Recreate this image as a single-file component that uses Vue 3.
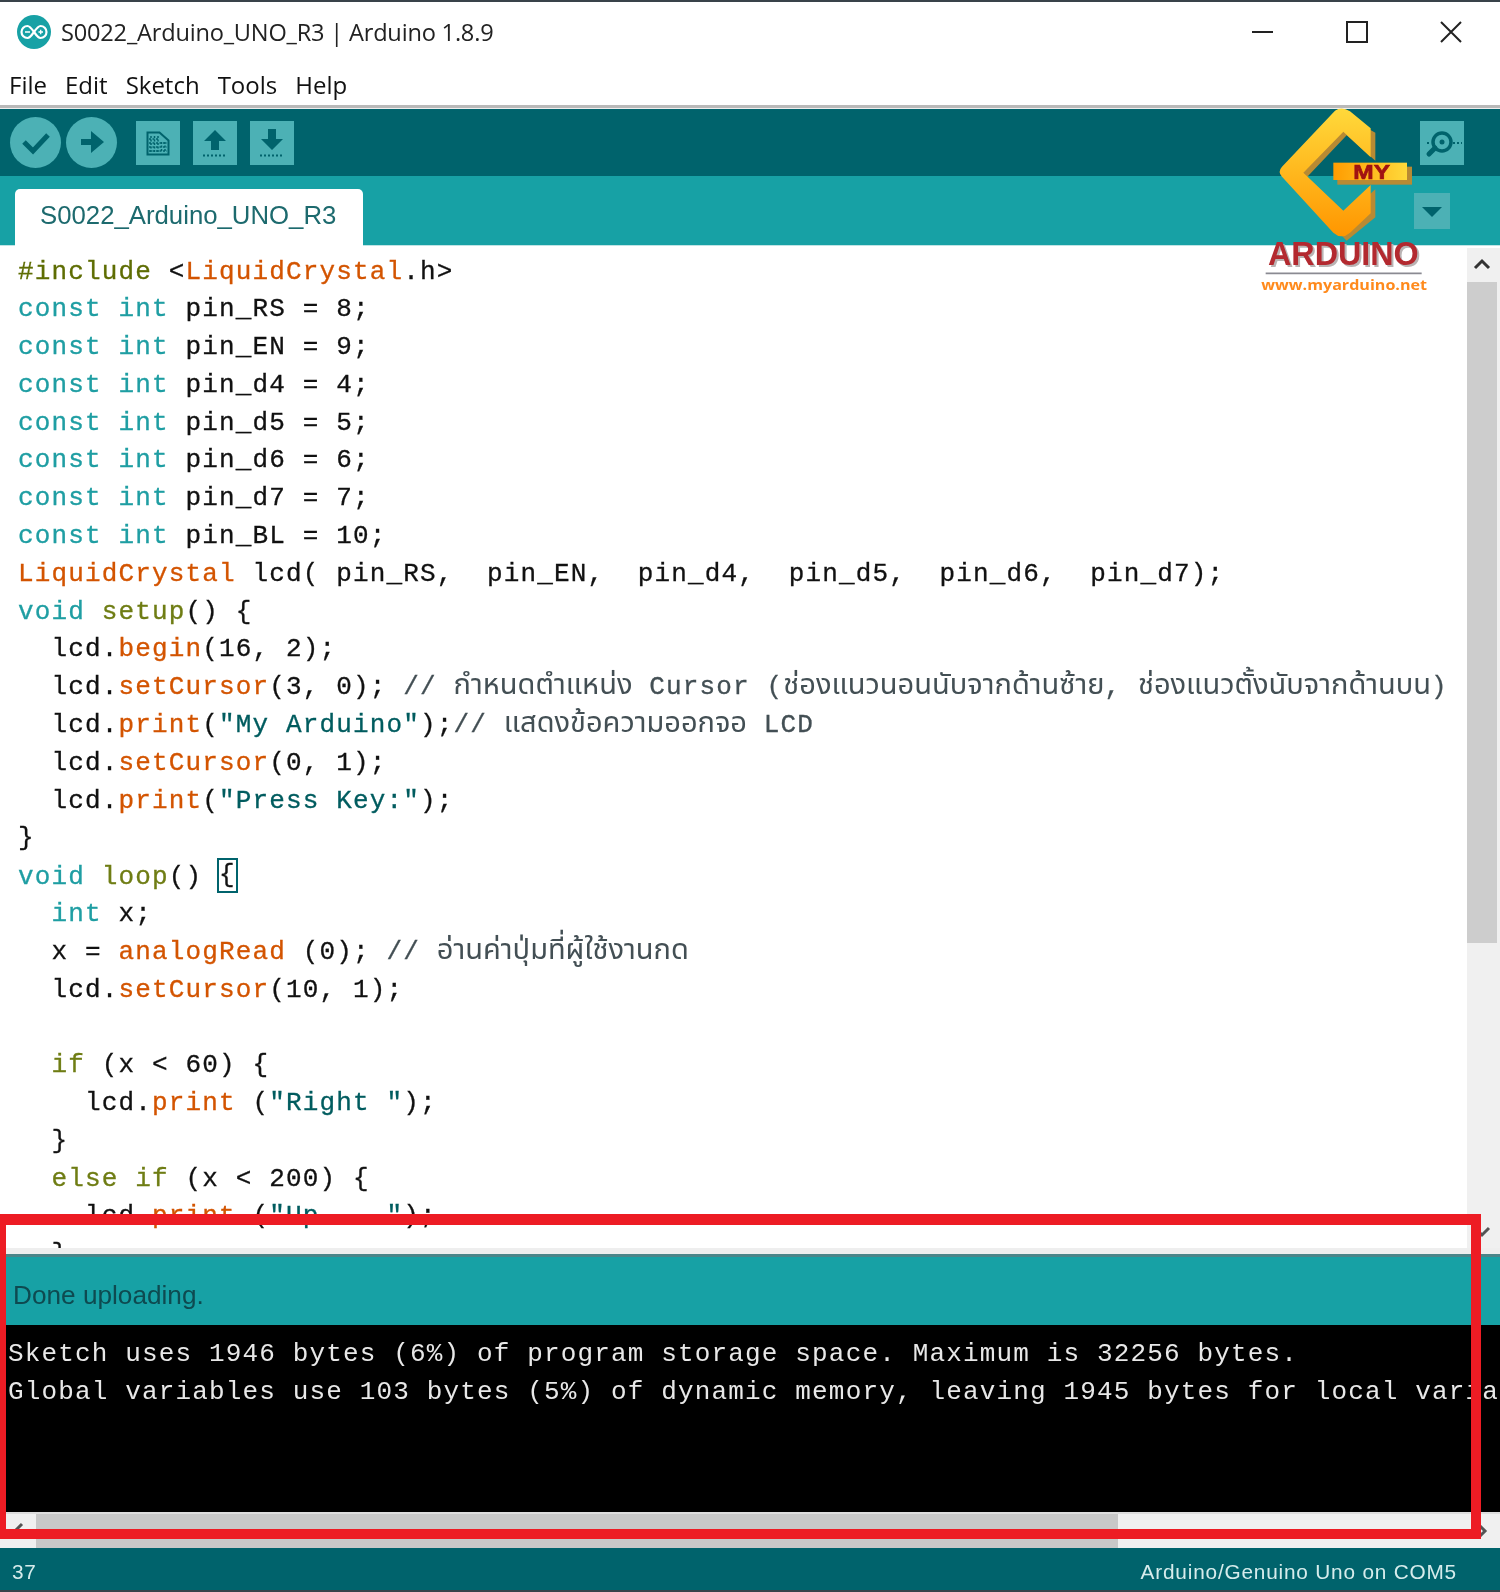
<script setup>
const code = [
  [['pp', '#include'], ['n', ' <'], ['f', 'LiquidCrystal'], ['n', '.h>']],
  ...[['pin_RS', '8'], ['pin_EN', '9'], ['pin_d4', '4'], ['pin_d5', '5'], ['pin_d6', '6'], ['pin_d7', '7'], ['pin_BL', '10']].map(
    ([name, value]) => [['k', 'const'], ['n', ' '], ['k', 'int'], ['n', ` ${name} = ${value};`]]
  ),
  [['f', 'LiquidCrystal'], ['n', ' lcd( pin_RS,  pin_EN,  pin_d4,  pin_d5,  pin_d6,  pin_d7);']],
  [['k', 'void'], ['n', ' '], ['o', 'setup'], ['n', '() {']],
  [['n', '  lcd.'], ['f', 'begin'], ['n', '(16, 2);']],
  [['n', '  lcd.'], ['f', 'setCursor'], ['n', '(3, 0); '], ['c', '// '], ['t', 'กำหนดตำแหน่ง'], ['c', ' Cursor ('], ['t', 'ช่องแนวนอนนับจากด้านซ้าย'], ['c', ', '], ['t', 'ช่องแนวตั้งนับจากด้านบน'], ['c', ')']],
  [['n', '  lcd.'], ['f', 'print'], ['n', '('], ['s', '"My Arduino"'], ['n', ');'], ['c', '// '], ['t', 'แสดงข้อความออกจอ'], ['c', ' LCD']],
  [['n', '  lcd.'], ['f', 'setCursor'], ['n', '(0, 1);']],
  [['n', '  lcd.'], ['f', 'print'], ['n', '('], ['s', '"Press Key:"'], ['n', ');']],
  [['n', '}']],
  [['k', 'void'], ['n', ' '], ['o', 'loop'], ['n', '() '], ['b', '{']],
  [['n', '  '], ['k', 'int'], ['n', ' x;']],
  [['n', '  x = '], ['f', 'analogRead'], ['n', ' (0); '], ['c', '// '], ['t', 'อ่านค่าปุ่มที่ผู้ใช้งานกด']],
  [['n', '  lcd.'], ['f', 'setCursor'], ['n', '(10, 1);']],
  [['n', ' ']],
  [['n', '  '], ['o', 'if'], ['n', ' (x < 60) {']],
  [['n', '    lcd.'], ['f', 'print'], ['n', ' ('], ['s', '"Right "'], ['n', ');']],
  [['n', '  }']],
  [['n', '  '], ['o', 'else'], ['n', ' '], ['o', 'if'], ['n', ' (x < 200) {']],
  [['n', '    lcd.'], ['f', 'print'], ['n', ' ('], ['s', '"Up    "'], ['n', ');']],
  [['n', '  }']]
]
const consoleLines = [
  'Sketch uses 1946 bytes (6%) of program storage space. Maximum is 32256 bytes.',
  'Global variables use 103 bytes (5%) of dynamic memory, leaving 1945 bytes for local variables.'
]
const menus = ['File', 'Edit', 'Sketch', 'Tools', 'Help']
</script>

<template>
  <div class="app">
    <header class="title">
      <svg class="logo" viewBox="0 0 34 34" width="34" height="34">
        <circle cx="17" cy="17" r="17" fill="#17a1a5" />
        <path d="M10.500 11a6 6 0 1 0 0 12c4.500 0 8.500-12 13-12a6 6 0 1 1 0 12c-4.500 0-8.500-12-13-12z" fill="none" stroke="#fff" stroke-width="2.200" />
        <path d="M8 17h5M21.500 17h4.500M23.700 14.800v4.400" stroke="#fff" stroke-width="1.300" fill="none" />
      </svg>
      <span class="title-text">S0022_Arduino_UNO_R3 | Arduino 1.8.9</span>
      <div class="win">
        <svg width="22" height="22" viewBox="0 0 22 22"><path d="M0 11h21" stroke="#222" stroke-width="2" /></svg>
        <svg width="22" height="22" viewBox="0 0 22 22"><rect x="1" y="1" width="20" height="20" fill="none" stroke="#222" stroke-width="2" /></svg>
        <svg width="22" height="22" viewBox="0 0 22 22"><path d="M1 1l20 20M21 1L1 21" stroke="#222" stroke-width="2" /></svg>
      </div>
    </header>
    <nav class="menu"><span v-for="m in menus" :key="m">{{ m }}</span></nav>
    <div class="rule"></div>
    <div class="toolbar">
      <button class="btn round">
        <svg viewBox="0 0 51 51"><path d="M14 25l9 9 15-16" fill="none" stroke="#00636c" stroke-width="5" /></svg>
      </button>
      <button class="btn round">
        <svg viewBox="0 0 51 51"><path d="M15 22h10v-8l13 11-13 11v-8H15z" fill="#00636c" /></svg>
      </button>
      <button class="btn square first">
        <svg viewBox="0 0 44 44">
          <path d="M11.500 11.500h12l9 8v14h-21z" fill="none" stroke="#00636c" stroke-width="2" />
          <path d="M15 15v16M18.500 15v16M22 15v16M25.500 21v10M29 21v10M13 18h9M13 22h18M13 26h18M13 30h18" stroke="#00636c" stroke-width="1.500" stroke-dasharray="2 1.500" fill="none" />
        </svg>
      </button>
      <button class="btn square">
        <svg viewBox="0 0 44 44">
          <path d="M22 9l11 11h-7v9h-8v-9h-7z" fill="#00636c" />
          <path d="M10 34.500h24" stroke="#00636c" stroke-width="2" stroke-dasharray="2 2" />
        </svg>
      </button>
      <button class="btn square">
        <svg viewBox="0 0 44 44">
          <path d="M22 29L11 18h7V8h8v10h7z" fill="#00636c" />
          <path d="M10 34.500h24" stroke="#00636c" stroke-width="2" stroke-dasharray="2 2" />
        </svg>
      </button>
      <button class="btn square search">
        <svg viewBox="0 0 44 44">
          <circle cx="22" cy="21" r="9" fill="none" stroke="#00636c" stroke-width="3.500" />
          <circle cx="22" cy="21" r="2.500" fill="#00636c" />
          <path d="M15 27l-6 6" stroke="#00636c" stroke-width="5" stroke-linecap="round" />
          <path d="M7 22h4M33 22h9" stroke="#00636c" stroke-width="2" stroke-dasharray="2 2" />
        </svg>
      </button>
    </div>
    <div class="tabs">
      <div class="tab">S0022_Arduino_UNO_R3</div>
      <button class="drop">
        <svg viewBox="0 0 36 36"><path d="M8 14h20L18 24z" fill="#00636c" /></svg>
      </button>
    </div>
    <main class="main">
      <div class="code">
        <div v-for="(line, i) in code" :key="i" class="line">
          <span v-for="(tok, j) in line" :key="j" :class="tok[0]">{{ tok[1] }}</span>
        </div>
      </div>
      <div class="vscroll">
        <div class="vbtn"><svg viewBox="0 0 30 34" width="30" height="34"><path d="M8 20l7-7 7 7" fill="none" stroke="#333" stroke-width="3" /></svg></div>
        <div class="vthumb"></div>
        <div class="vbtn down"><svg viewBox="0 0 30 34" width="30" height="34"><path d="M8 14l7 7 7-7" fill="none" stroke="#555" stroke-width="3" /></svg></div>
      </div>
    </main>
    <div class="strip"></div>
    <div class="notice">Done uploading.</div>
    <div class="console">
      <div v-for="l in consoleLines" :key="l" class="cline">{{ l }}</div>
    </div>
    <div class="hscroll">
      <div class="hbtn"><svg viewBox="0 0 36 34" width="36" height="34"><path d="M22 10l-7 7 7 7" fill="none" stroke="#555" stroke-width="3" /></svg></div>
      <div class="hthumb"></div>
      <div class="hbtn right"><svg viewBox="0 0 36 34" width="36" height="34"><path d="M14 10l7 7-7 7" fill="none" stroke="#555" stroke-width="3" /></svg></div>
    </div>
    <footer class="status">
      <span>37</span>
      <span>Arduino/Genuino Uno on COM5</span>
    </footer>

    <svg class="brand" viewBox="0 0 900 960" width="300" height="320">
      <defs>
        <linearGradient id="cg" x1="0" y1="0" x2="0" y2="1">
          <stop offset="0" stop-color="#ffd93b" />
          <stop offset="1" stop-color="#ff9600" />
        </linearGradient>
        <linearGradient id="bg" x1="0" y1="0" x2="1" y2="0">
          <stop offset="0" stop-color="#ff9c00" />
          <stop offset="1" stop-color="#ffd93b" />
        </linearGradient>
      </defs>
      <path d="M432 345L526 398V482L440 406L322 530L440 645L526 568V652L440 722L250 528Z" fill="#b88a33" />
      <path d="M405 332Q425 318 450 334L512 385V472L430 395L310 518L430 632L512 555V640L450 698Q425 720 400 698L246 530Q232 515 246 500Z" fill="url(#cg)" />
      <rect x="412" y="500" width="224" height="54" fill="#b88a33" />
      <rect x="400" y="488" width="221" height="52" fill="url(#bg)" />
      <text class="my" x="460" y="537" textLength="110" lengthAdjust="spacingAndGlyphs">MY</text>
      <text class="ard-s" x="210" y="801" textLength="452" lengthAdjust="spacingAndGlyphs">ARDUINO</text>
      <text class="ard" x="204" y="795" textLength="452" lengthAdjust="spacingAndGlyphs">ARDUINO</text>
      <path d="M197 820H665" stroke="#8a8a92" stroke-width="5" />
      <text class="web" x="184" y="870" textLength="497" lengthAdjust="spacingAndGlyphs">www.myarduino.net</text>
    </svg>
    <div class="redbox"></div>
  </div>
</template>

<style scoped>
.app {
  position: relative;
  width: 1500px;
  height: 1592px;
  overflow: hidden;
  background: #fff;
  display: flex;
  flex-direction: column;
  border-top: 2px solid #39434a;
  border-bottom: 2px solid #39434a;
  box-sizing: border-box;
  font-family: "Open Sans", "Noto Sans", sans-serif;
  filter: blur(0.5px);
}
.title {
  height: 70px;
  flex: none;
  box-sizing: border-box;
  display: flex;
  align-items: center;
  padding: 0 38px 10px 17px;
}
.logo { flex: none; }
.title-text {
  margin-left: 10px;
  font-size: 23.600px;
  color: #222;
  letter-spacing: -0.2px;
}
.win {
  margin-left: auto;
  display: flex;
  gap: 72px;
}
.menu {
  height: 33px;
  flex: none;
  display: flex;
  gap: 18px;
  padding-left: 9px;
  font-size: 24px;
  line-height: 26px;
  color: #111;
}
.rule {
  height: 4px;
  flex: none;
  background: #b9b9b9;
  border-bottom: 1px solid #eee;
  box-sizing: border-box;
}
.toolbar {
  height: 67px;
  flex: none;
  background: #00636c;
  display: flex;
  align-items: center;
  padding: 0 36px 0 10px;
}
.btn {
  border: 0;
  padding: 0;
  background: #4cb1b5;
  flex: none;
}
.btn svg { display: block; width: 100%; height: 100%; }
.round {
  width: 51px;
  height: 51px;
  border-radius: 50%;
  margin-right: 5px;
}
.square {
  width: 44px;
  height: 44px;
  margin-right: 13px;
}
.first { margin-left: 14px; }
.search { margin-left: auto; margin-right: 0; }
.tabs {
  height: 70px;
  flex: none;
  background: #17a1a5;
  display: flex;
  align-items: flex-end;
  padding: 0 50px 0 15px;
  border-bottom: 1px solid #bfe4e5;
  box-sizing: border-box;
}
.tab {
  width: 348px;
  height: 57px;
  margin-bottom: -1px;
  background: #fff;
  border-radius: 5px 5px 0 0;
  box-sizing: border-box;
  padding-left: 25px;
  font: 25.750px/53px "Liberation Sans", sans-serif;
  color: #1d6a6e;
  white-space: nowrap;
}
.drop {
  margin-left: auto;
  width: 36px;
  height: 36px;
  padding: 0;
  border: 0;
  background: #4cb1b5;
  align-self: flex-start;
  margin-top: 17px;
}
.drop svg { display: block; width: 100%; height: 100%; }
.main {
  height: 1002px;
  flex: none;
  display: flex;
  overflow: hidden;
}
.code {
  flex: 1;
  min-width: 0;
  padding: 7.500px 0 0 18px;
  overflow: hidden;
}
.line {
  height: 37.800px;
  line-height: 37.800px;
  white-space: pre;
  font-family: "Liberation Mono", monospace;
  font-size: 26px;
  letter-spacing: 1.150px;
  color: #111;
  -webkit-text-stroke: 0.3px;
}
.k { color: #1f9ea3; }
.o { color: #6f7d14; }
.pp { color: #5e6d03; }
.f { color: #d35400; }
.s { color: #005c5f; }
.c { color: #434f54; }
.t {
  color: #434f54;
  letter-spacing: 0;
  font-size: 29px;
  line-height: 1;
  -webkit-text-stroke: 0;
  font-family: "Noto Sans Thai", "Noto Sans", "DejaVu Sans", sans-serif;
}
.b {
  display: inline-block;
  line-height: 31px;
  border: 2px solid #00636c;
  margin: 0 -2px;
  vertical-align: 2px;
}
.vscroll {
  width: 33px;
  flex: none;
  background: #f0f0f0;
  margin-top: 2px;
  display: flex;
  flex-direction: column;
}
.vbtn { height: 34px; flex: none; }
.vbtn svg { display: block; }
.vbtn.down { margin-top: auto; }
.vthumb {
  height: 661px;
  width: 30px;
  background: #cdcdcd;
}
.strip {
  height: 6px;
  flex: none;
  background: #eeeeee;
}
.notice {
  height: 71px;
  flex: none;
  box-sizing: border-box;
  background: #17a1a5;
  border-top: 3px solid #4b8589;
  padding: 22px 0 0 13px;
  font: 26.200px/32px "Liberation Sans", sans-serif;
  color: #0e4a50;
}
.console {
  height: 187px;
  flex: none;
  box-sizing: border-box;
  background: #000;
  padding-top: 10px;
  overflow: hidden;
}
.cline {
  padding-left: 8px;
  height: 38px;
  line-height: 38px;
  white-space: pre;
  font-family: "Liberation Mono", monospace;
  font-size: 26px;
  letter-spacing: 1.150px;
  color: #e8e8e8;
}
.hscroll {
  height: 36px;
  flex: none;
  box-sizing: border-box;
  border-top: 2px solid #ddd;
  background: #f0f0f0;
  display: flex;
}
.hbtn { width: 36px; flex: none; }
.hbtn svg { display: block; }
.hbtn.right { margin-left: auto; }
.hthumb {
  width: 1082px;
  background: #c8c8c8;
}
.status {
  height: 42px;
  flex: none;
  box-sizing: border-box;
  background: #00636c;
  display: flex;
  align-items: center;
  justify-content: space-between;
  padding: 5px 43px 0 12px;
  font: 20.800px "Liberation Sans", sans-serif;
  letter-spacing: 0.8px;
  color: #d6ecec;
}
.brand {
  position: absolute;
  left: 1200px;
  top: -2px;
  pointer-events: none;
}
.my {
  font: 700 60px "Liberation Sans", sans-serif;
  fill: #a11212;
  stroke: #a11212;
  stroke-width: 2px;
}
.ard, .ard-s {
  font: 700 97px "Liberation Sans", sans-serif;
}
.ard { fill: #b3292f; }
.ard-s { fill: #b9b3b3; }
.web {
  font: 700 40px "Open Sans", sans-serif;
  fill: #ff8a1c;
}
.redbox {
  position: absolute;
  left: 0;
  top: 1212px;
  width: 1481px;
  height: 325px;
  box-sizing: border-box;
  border: solid #ed1c24;
  border-width: 11px 10px 10px 6px;
  pointer-events: none;
}
</style>
